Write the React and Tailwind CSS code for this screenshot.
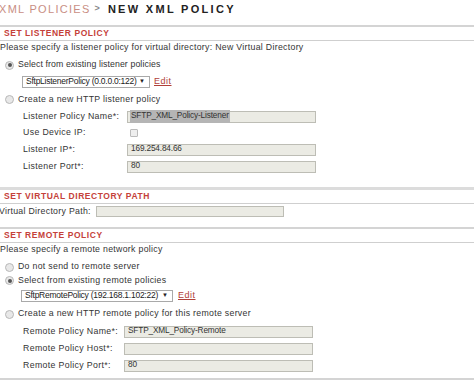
import React from "react";

const F = { fontFamily: '"Liberation Sans", Arial, sans-serif' };

function Radio({ checked }) {
  return (
    <span className="inline-flex items-center justify-center w-[9px] h-[9px] rounded-full border border-[#b8b8b8] bg-[#e8e8e8] shrink-0">
      {checked && <span className="w-[4px] h-[4px] rounded-full bg-[#555]" />}
    </span>
  );
}

function Header({ children }) {
  return (
    <div className="h-[14px] flex items-center pl-[4px] text-[8.5px] font-bold tracking-[0.55px] text-[#c5413a] border-b border-[#cfcfcf] whitespace-nowrap">
      {children}
    </div>
  );
}

function Field({ label, value, labelW, h = "h-[17px]" }) {
  return (
    <div className={`flex items-center ${h} whitespace-nowrap`}>
      <div className={`${labelW} shrink-0 pl-[23px] text-[8.75px] tracking-[0.35px] text-[#333]`}>{label}</div>
      <div className="w-[189px] h-[12px] border border-[#bdbdb5] bg-[#ebebe4] flex items-center pl-[3px] text-[8.25px] text-[#333] tracking-[-0.15px]">
        {value}
      </div>
    </div>
  );
}

function Select({ text, w }) {
  return (
    <div className={`${w} h-[12px] border border-[#a9a9a9] bg-white flex items-center justify-between pl-[3px] pr-[4px] text-[8.5px] text-[#222] whitespace-nowrap`}>
      <span className="tracking-[-0.25px]">{text}</span>
      <span className="text-[6px]">▼</span>
    </div>
  );
}

const T = "text-[8.75px] tracking-[0.3px] whitespace-nowrap";

export default function App() {
  return (
    <div style={F} className="w-[474px] h-[386px] bg-white overflow-hidden text-[#333]">
      <div className="h-[27px] flex items-start pt-[1px] whitespace-nowrap text-[11px] border-b-2 border-[#d4d4d4]">
        <span className="tracking-[1.3px] text-[#c98e84] -ml-[1px]">XML POLICIES</span>
        <span className="text-[#888] ml-[4px] font-bold text-[9px] mt-[1px]">&gt;</span>
        <span className="tracking-[2.3px] font-bold text-[#222] ml-[8px]">NEW XML POLICY</span>
      </div>
      <Header>SET LISTENER POLICY</Header>
      <div className={`h-[13px] flex items-center ${T}`}>
        Please specify a listener policy for virtual directory: New Virtual Directory
      </div>
      <div className={`h-[16px] mt-[3px] flex items-center gap-[4px] pl-[5px] ${T}`}>
        <Radio checked />
        <span className="tracking-[0.1px]">Select from existing listener policies</span>
      </div>
      <div className="h-[17px] flex items-center pl-[22px] gap-[4px]">
        <Select text="SftpListenerPolicy (0.0.0.0:122)" w="w-[128px]" />
        <span className="text-[9px] text-[#b04038] underline tracking-[0.5px]">Edit</span>
      </div>
      <div className={`h-[17px] mt-[1px] flex items-center gap-[4px] pl-[5px] ${T}`}>
        <Radio />
        <span>Create a new HTTP listener policy</span>
      </div>
      <Field label="Listener Policy Name*:" value={<span className="bg-[#b5b5b5] px-[1px] -ml-[1px]">SFTP_XML_Policy-Listener</span>} labelW="w-[127px]" />
      <div className="h-[16px] flex items-center whitespace-nowrap">
        <div className="w-[127px] shrink-0 pl-[23px] text-[8.75px] tracking-[0.35px]">Use Device IP:</div>
        <span className="ml-[3px] w-[8px] h-[8px] border border-[#bbb] bg-[#eee] rounded-[1px]" />
      </div>
      <Field label="Listener IP*:" value="169.254.84.66" labelW="w-[127px]" />
      <Field label="Listener Port*:" value="80" labelW="w-[127px]" />
      <div className="h-[15px] border-b-[3px] border-[#dcdcdc]" />
      <Header>SET VIRTUAL DIRECTORY PATH</Header>
      <div className={`h-[15px] flex items-center ${T}`}>
        <span className="-ml-[1px] w-[97px]">Virtual Directory Path:</span>
        <div className="w-[188px] h-[11px] border border-[#bdbdb5] bg-[#ebebe4]" />
      </div>
      <div className="h-[10px] border-b-2 border-[#d4d4d4]" />
      <Header>SET REMOTE POLICY</Header>
      <div className={`h-[13px] flex items-center ${T}`}>
        Please specify a remote network policy
      </div>
      <div className={`h-[14px] mt-[4px] flex items-center gap-[4px] pl-[5px] ${T}`}>
        <Radio />
        <span>Do not send to remote server</span>
      </div>
      <div className={`h-[13px] flex items-center gap-[4px] pl-[5px] ${T}`}>
        <Radio checked />
        <span>Select from existing remote policies</span>
      </div>
      <div className="h-[17px] flex items-center pl-[21px] gap-[5px]">
        <Select text="SftpRemotePolicy (192.168.1.102:22)" w="w-[152px]" />
        <span className="text-[9px] text-[#b04038] underline tracking-[0.5px]">Edit</span>
      </div>
      <div className={`h-[18px] mt-[1px] flex items-center gap-[4px] pl-[5px] ${T}`}>
        <Radio />
        <span>Create a new HTTP remote policy for this remote server</span>
      </div>
      <Field label="Remote Policy Name*:" value="SFTP_XML_Policy-Remote" labelW="w-[124px]" />
      <Field label="Remote Policy Host*:" value="" labelW="w-[124px]" />
      <Field label="Remote Policy Port*:" value="80" labelW="w-[124px]" />
      <div className="h-[6px] border-b-2 border-[#d4d4d4]" />
    </div>
  );
}
